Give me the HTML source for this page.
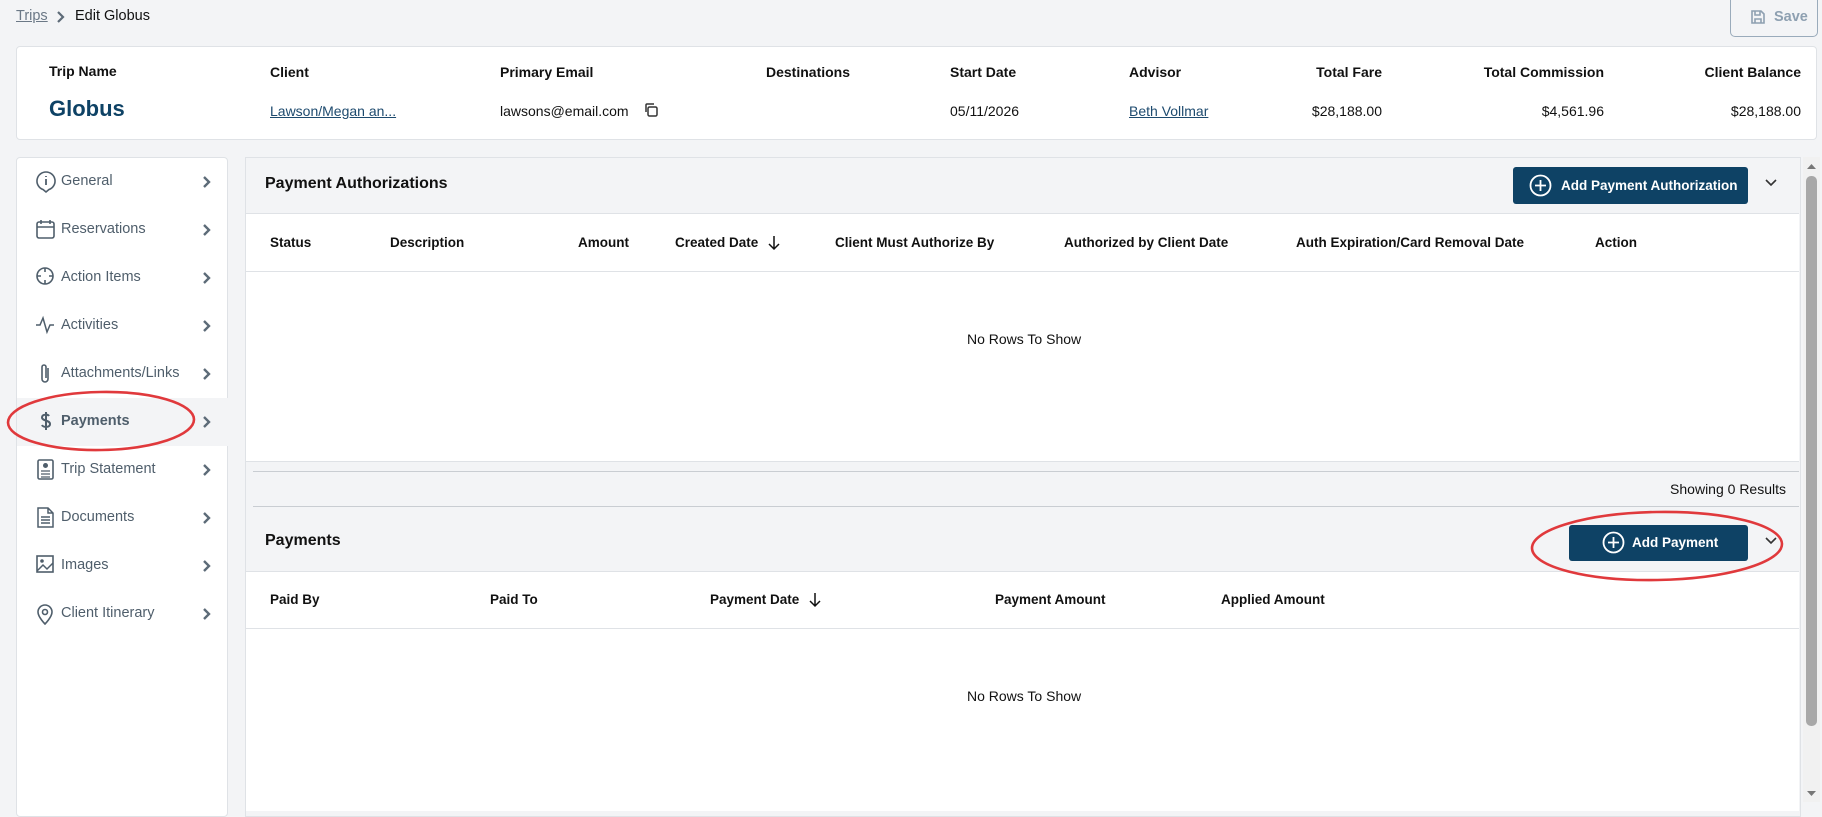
<!DOCTYPE html>
<html><head><meta charset="utf-8"><style>
*{box-sizing:border-box;margin:0;padding:0}
body{width:1822px;height:802px;background:#f3f4f6;font-family:"Liberation Sans",sans-serif;position:relative;overflow:hidden;color:#111}
.a{position:absolute;white-space:nowrap}
.lbl{font-size:14px;font-weight:bold;color:#111}
.val{font-size:14px;color:#111}
.lnk{color:#1d4a6e;text-decoration:underline}
.r{text-align:right}
.side{position:absolute;left:16px;top:157px;width:212px;height:660px;background:#fff;border:1px solid #dfe2e6;border-radius:4px}
.item{position:absolute;left:0;width:211px;height:48px;font-size:14.5px;color:#4f5e6b}
.item .t{position:absolute;left:44px;top:15px}
.item svg.ic{position:absolute;left:18px;top:12px}
.th{font-size:13.5px;font-weight:bold;color:#111}
.btn{position:absolute;background:#0e4265;color:#fff;border-radius:3px;font-size:13.5px;font-weight:bold;white-space:nowrap}
</style></head><body>
<div class="a" style="left:16px;top:8px;font-size:14.5px"><span class="lnk" style="color:#6b7886">Trips</span></div>
<svg class="a" style="left:56px;top:11px" width="10" height="12" viewBox="0 0 10 12"><path d="M2 1l5 5-5 5" fill="none" stroke="#5d6b78" stroke-width="2.2"/></svg>
<div class="a" style="left:75px;top:8px;font-size:14.5px">Edit Globus</div>
<div class="a" style="left:1730px;top:0;width:88px;height:37px;border:1px solid #9aabbb;border-top:none;border-radius:0 0 5px 5px;color:#8ea0b1;font-size:14.5px;font-weight:bold">
<svg style="position:absolute;left:19px;top:9px" width="16" height="16" viewBox="0 0 16 16"><path d="M2 2h9l3 3v9H2z M5 2v4h5V2 M5 14v-4h6v4" fill="none" stroke="#8ea0b1" stroke-width="1.6"/></svg>
<span style="position:absolute;left:43px;top:9px">Save</span></div>

<div class="a" style="left:16px;top:46px;width:1801px;height:94px;background:#fff;border:1px solid #dfe2e6;border-radius:4px"></div>
<div class="a lbl" style="left:49px;top:63px">Trip Name</div>
<div class="a" style="left:49px;top:96px;font-size:22px;font-weight:bold;color:#0e4265">Globus</div>
<div class="a lbl" style="left:270px;top:64px">Client</div>
<div class="a val lnk" style="left:270px;top:103px">Lawson/Megan an...</div>
<div class="a lbl" style="left:500px;top:64px">Primary Email</div>
<div class="a val" style="left:500px;top:103px">lawsons@email.com</div>
<svg class="a" style="left:643px;top:102px" width="16" height="16" viewBox="0 0 16 16"><rect x="5" y="5" width="9" height="9" rx="1.5" fill="none" stroke="#333" stroke-width="1.5"/><path d="M3 10V3a1 1 0 0 1 1-1h7" fill="none" stroke="#333" stroke-width="1.5"/></svg>
<div class="a lbl" style="left:766px;top:64px">Destinations</div>
<div class="a lbl" style="left:950px;top:64px">Start Date</div>
<div class="a val" style="left:950px;top:103px">05/11/2026</div>
<div class="a lbl" style="left:1129px;top:64px">Advisor</div>
<div class="a val lnk" style="left:1129px;top:103px">Beth Vollmar</div>
<div class="a lbl r" style="right:440px;top:64px">Total Fare</div>
<div class="a val r" style="right:440px;top:103px">$28,188.00</div>
<div class="a lbl r" style="right:218px;top:64px">Total Commission</div>
<div class="a val r" style="right:218px;top:103px">$4,561.96</div>
<div class="a lbl r" style="right:21px;top:64px">Client Balance</div>
<div class="a val r" style="right:21px;top:103px">$28,188.00</div>

<div class="side">
<div class="item" style="top:0"><svg class="ic" width="22" height="24" viewBox="0 0 22 24"><path d="M11 2a9 9 0 0 1 3 17.5L11 22l-3-2.5A9 9 0 0 1 11 2z" fill="none" stroke="#4f5e6b" stroke-width="1.6"/><path d="M11 9v6M11 6v1" stroke="#4f5e6b" stroke-width="1.8"/></svg><span class="t">General</span></div>
<div class="item" style="top:48px"><svg class="ic" width="22" height="22" viewBox="0 0 22 22"><rect x="2" y="4" width="17" height="16" rx="2" fill="none" stroke="#4f5e6b" stroke-width="1.6"/><path d="M2 9h17M6 2v4M15 2v4" stroke="#4f5e6b" stroke-width="1.6"/></svg><span class="t">Reservations</span></div>
<div class="item" style="top:96px"><svg class="ic" width="22" height="22" viewBox="0 0 22 22"><circle cx="10" cy="10" r="8" fill="none" stroke="#4f5e6b" stroke-width="1.6"/><path d="M10 2v4M10 14v4M2 10h4M14 10h4" stroke="#4f5e6b" stroke-width="1.6"/></svg><span class="t">Action Items</span></div>
<div class="item" style="top:144px"><svg class="ic" width="22" height="22" viewBox="0 0 22 22"><path d="M1 11h4l3-7 4 14 3-7h4" fill="none" stroke="#4f5e6b" stroke-width="1.5"/></svg><span class="t">Activities</span></div>
<div class="item" style="top:192px"><svg class="ic" width="22" height="24" viewBox="0 0 22 24"><path d="M13 6v11a3 3 0 0 1-6 0V5a2 2 0 0 1 4 0v11" fill="none" stroke="#4f5e6b" stroke-width="1.6"/></svg><span class="t">Attachments/Links</span></div>
<div class="item" style="top:240px;background:#f3f4f6"><svg class="ic" width="22" height="22" viewBox="0 0 22 22"><path d="M14 6c-1-2-7-2-7 1.5S15 10 15 14s-7 3.5-8 1M11 2v18" fill="none" stroke="#4f5e6b" stroke-width="2"/></svg><span class="t" style="font-weight:bold">Payments</span></div>
<div class="item" style="top:288px"><svg class="ic" width="22" height="24" viewBox="0 0 22 24"><rect x="3" y="2" width="15" height="19" rx="1.5" fill="none" stroke="#4f5e6b" stroke-width="1.6"/><circle cx="10.5" cy="7.5" r="2.5" fill="#4f5e6b"/><path d="M6 13h9M6 16h9M6 19h9" stroke="#4f5e6b" stroke-width="1.2"/></svg><span class="t">Trip Statement</span></div>
<div class="item" style="top:336px"><svg class="ic" width="22" height="24" viewBox="0 0 22 24"><path d="M3 2h10l5 5v14H3z M13 2v5h5 M6 11h9M6 14h9M6 17h9" fill="none" stroke="#4f5e6b" stroke-width="1.5"/></svg><span class="t">Documents</span></div>
<div class="item" style="top:384px"><svg class="ic" width="22" height="22" viewBox="0 0 22 22"><rect x="2" y="2" width="16" height="16" fill="none" stroke="#4f5e6b" stroke-width="1.6"/><circle cx="7" cy="7" r="1.8" fill="#4f5e6b"/><path d="M2 17l6-6 4 4 6-6" fill="none" stroke="#4f5e6b" stroke-width="1.5"/></svg><span class="t">Images</span></div>
<div class="item" style="top:432px"><svg class="ic" width="22" height="24" viewBox="0 0 22 24"><path d="M10 22s7-7 7-12a7 7 0 0 0-14 0c0 5 7 12 7 12z" fill="none" stroke="#4f5e6b" stroke-width="1.6"/><circle cx="10" cy="10" r="2.5" fill="none" stroke="#4f5e6b" stroke-width="1.6"/></svg><span class="t">Client Itinerary</span></div>
</div>
<svg class="a" style="left:200px;top:174px" width="14" height="460"><g fill="none" stroke="#5d6b78" stroke-width="2.4">
<path d="M4 3l5 5-5 5"/><path d="M4 51l5 5-5 5"/><path d="M4 99l5 5-5 5"/><path d="M4 147l5 5-5 5"/><path d="M4 195l5 5-5 5"/><path d="M4 243l5 5-5 5"/><path d="M4 291l5 5-5 5"/><path d="M4 339l5 5-5 5"/><path d="M4 387l5 5-5 5"/><path d="M4 435l5 5-5 5"/></g></svg>

<div class="a" style="left:245px;top:157px;width:1556px;height:660px;background:#f3f4f6;border:1px solid #dfe2e6"></div>
<div class="a" style="left:265px;top:175px;font-size:16px;font-weight:bold">Payment Authorizations</div>
<div class="btn" style="left:1513px;top:167px;width:235px;height:37px"><svg style="position:absolute;left:16px;top:7px" width="23" height="23" viewBox="0 0 23 23"><circle cx="11.5" cy="11.5" r="10" fill="none" stroke="#fff" stroke-width="1.8"/><path d="M11.5 6v11M6 11.5h11" stroke="#fff" stroke-width="1.8"/></svg><span style="position:absolute;left:48px;top:11px">Add Payment Authorization</span></div>
<svg class="a" style="left:1764px;top:178px" width="14" height="10"><path d="M2 2l5 5 5-5" fill="none" stroke="#333" stroke-width="1.6"/></svg>
<div class="a" style="left:246px;top:213px;width:1553px;height:249px;background:#fff;border-top:1px solid #dfe2e6;border-bottom:1px solid #dfe2e6"></div>
<div class="a" style="left:246px;top:271px;width:1553px;height:1px;background:#dfe2e6"></div>
<div class="a th" style="left:270px;top:235px">Status</div>
<div class="a th" style="left:390px;top:235px">Description</div>
<div class="a th" style="left:578px;top:235px">Amount</div>
<div class="a th" style="left:675px;top:235px">Created Date</div>
<svg class="a" style="left:768px;top:235px" width="12" height="16"><path d="M6 1v13M1 9l5 5 5-5" fill="none" stroke="#111" stroke-width="1.5"/></svg>
<div class="a th" style="left:835px;top:235px">Client Must Authorize By</div>
<div class="a th" style="left:1064px;top:235px">Authorized by Client Date</div>
<div class="a th" style="left:1296px;top:235px">Auth Expiration/Card Removal Date</div>
<div class="a th" style="left:1595px;top:235px">Action</div>
<div class="a" style="left:967px;top:331px;font-size:14px">No Rows To Show</div>
<div class="a" style="left:253px;top:471px;width:1546px;height:1px;background:#c9cdd2"></div>
<div class="a r" style="right:36px;top:481px;font-size:14px">Showing 0 Results</div>
<div class="a" style="left:253px;top:506px;width:1546px;height:1px;background:#c9cdd2"></div>
<div class="a" style="left:265px;top:532px;font-size:16px;font-weight:bold">Payments</div>
<div class="btn" style="left:1569px;top:525px;width:179px;height:36px"><svg style="position:absolute;left:33px;top:6px" width="23" height="23" viewBox="0 0 23 23"><circle cx="11.5" cy="11.5" r="10" fill="none" stroke="#fff" stroke-width="1.8"/><path d="M11.5 6v11M6 11.5h11" stroke="#fff" stroke-width="1.8"/></svg><span style="position:absolute;left:63px;top:10px">Add Payment</span></div>
<svg class="a" style="left:1764px;top:536px" width="14" height="10"><path d="M2 2l5 5 5-5" fill="none" stroke="#333" stroke-width="1.6"/></svg>
<div class="a" style="left:246px;top:571px;width:1553px;height:240px;background:#fff;border-top:1px solid #dfe2e6"></div>
<div class="a" style="left:246px;top:628px;width:1553px;height:1px;background:#dfe2e6"></div>
<div class="a th" style="left:270px;top:592px">Paid By</div>
<div class="a th" style="left:490px;top:592px">Paid To</div>
<div class="a th" style="left:710px;top:592px">Payment Date</div>
<svg class="a" style="left:809px;top:592px" width="12" height="16"><path d="M6 1v13M1 9l5 5 5-5" fill="none" stroke="#111" stroke-width="1.5"/></svg>
<div class="a th" style="left:995px;top:592px">Payment Amount</div>
<div class="a th" style="left:1221px;top:592px">Applied Amount</div>
<div class="a" style="left:967px;top:688px;font-size:14px">No Rows To Show</div>

<div class="a" style="left:1803px;top:157px;width:17px;height:645px;background:#f1f1f1"></div>
<svg class="a" style="left:1805px;top:161px" width="13" height="10"><path d="M2 8l4.5-5 4.5 5z" fill="#777"/></svg>
<div class="a" style="left:1806px;top:176px;width:11px;height:550px;background:#a8a8a8;border-radius:5px"></div>
<svg class="a" style="left:1805px;top:789px" width="13" height="10"><path d="M2 2l4.5 5 4.5-5z" fill="#777"/></svg>

<svg class="a" style="left:0;top:380px" width="210" height="85"><ellipse cx="101" cy="41" rx="93" ry="29" fill="none" stroke="#e0393c" stroke-width="2.6" transform="rotate(-1 101 41)"/></svg>
<svg class="a" style="left:1525px;top:505px" width="265" height="85"><ellipse cx="132" cy="41" rx="125" ry="34" fill="none" stroke="#e0393c" stroke-width="2.6" transform="rotate(-1 132 41)"/></svg>
</body></html>
